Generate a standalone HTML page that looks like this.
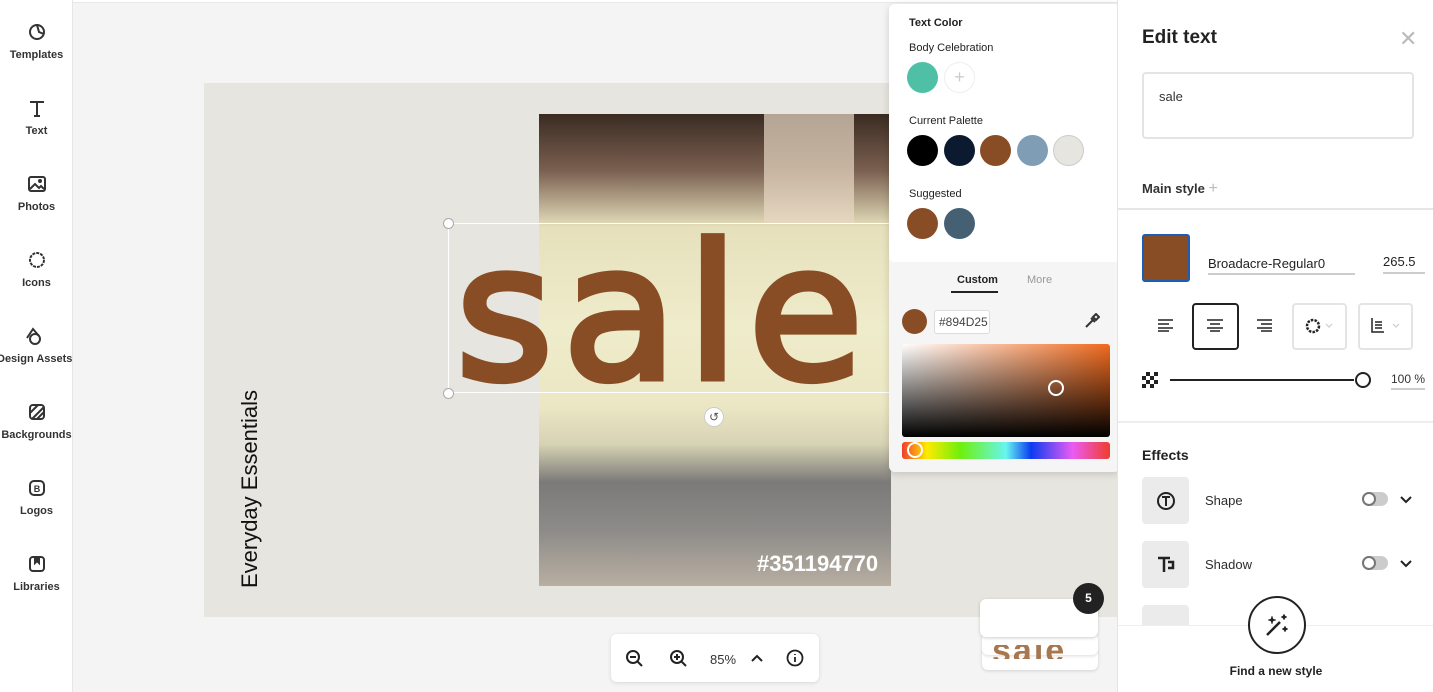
<!DOCTYPE html>
<html><head><style>
*{margin:0;padding:0;box-sizing:border-box}
body{width:1433px;height:692px;overflow:hidden;background:#f4f4f4;font-family:"Liberation Sans",sans-serif;position:relative;color:#2c2c2c}
.abs{position:absolute}
.side{left:0;top:0;width:73px;height:692px;background:#fff;border-right:1px solid #e6e6e6}
.side .it{position:absolute;left:0;width:73px;text-align:center;font-size:11px;font-weight:bold;color:#333}
.side svg{display:block;margin:0 auto 7px}
.circ{position:absolute;width:31px;height:31px;border-radius:50%}
.lbl{position:absolute;font-size:11px;font-weight:bold;color:#222}
.rp{left:1117px;top:0;width:316px;height:692px;background:#fff;border-left:1px solid #e4e4e4}
</style></head><body>
<div class="abs" style="left:0;top:0;width:1433px;height:3px;background:#fff;border-bottom:1px solid #e8e8e8"></div>
<div class="abs side">
 <div class="it" style="top:22px"><svg width="20" height="20" viewBox="0 0 20 20" fill="none" stroke="#333" stroke-width="2"><circle cx="10" cy="10" r="7"/><path d="M10 3 L12 10 L17 12"/></svg>Templates</div>
 <div class="it" style="top:98px"><svg width="20" height="20" viewBox="0 0 20 20" fill="none" stroke="#333" stroke-width="2"><path d="M3 4H17M10 4V18M7 18H13"/></svg>Text</div>
 <div class="it" style="top:174px"><svg width="20" height="20" viewBox="0 0 20 20" fill="none" stroke="#333" stroke-width="2"><rect x="2" y="3" width="16" height="14" rx="2"/><path d="M3 15 L8 10 L12 14 L14 12 L17 15"/><circle cx="13" cy="7" r="1"/></svg>Photos</div>
 <div class="it" style="top:250px"><svg width="20" height="20" viewBox="0 0 20 20" fill="none" stroke="#333" stroke-width="2"><circle cx="10" cy="10" r="7" stroke-dasharray="3 1"/></svg>Icons</div>
 <div class="it" style="top:326px;white-space:nowrap;left:-3px"><svg width="20" height="20" viewBox="0 0 20 20" fill="none" stroke="#333" stroke-width="2"><path d="M3 12 L9 3 L15 10"/><circle cx="11" cy="13" r="5"/></svg>Design Assets</div>
 <div class="it" style="top:402px"><svg width="20" height="20" viewBox="0 0 20 20" fill="none" stroke="#333" stroke-width="2"><rect x="3" y="3" width="14" height="14" rx="3"/><path d="M3 11L11 3M5 17L17 5M10 17L17 10"/></svg>Backgrounds</div>
 <div class="it" style="top:478px"><svg width="20" height="20" viewBox="0 0 20 20" fill="none" stroke="#333" stroke-width="2"><rect x="3" y="3" width="14" height="14" rx="4"/><text x="10" y="14" font-size="9" text-anchor="middle" fill="#333" stroke="none" font-weight="bold">B</text></svg>Logos</div>
 <div class="it" style="top:554px"><svg width="20" height="20" viewBox="0 0 20 20" fill="none" stroke="#333" stroke-width="2"><rect x="3" y="3" width="14" height="14" rx="3"/><path d="M8 3V9L10 7L12 9V3" fill="#333"/></svg>Libraries</div>
</div>
<!-- card -->
<div class="abs" style="left:204px;top:83px;width:913px;height:534px;background:#e6e5df"></div>
<div class="abs" style="left:539px;top:114px;width:352px;height:472px;background:linear-gradient(180deg,#3a2b22 0%,#7a6050 12%,#e6e0bc 24%,#efeccb 45%,#ebe7c4 62%,#d6d2b4 70%,#7b7a78 78%,#8c8b88 88%,#b8aea2 100%);overflow:hidden">
 <div class="abs" style="left:225px;top:0;width:90px;height:110px;background:#e8d8c4;opacity:.7"></div>
 <div class="abs" style="left:218px;top:437px;font-size:22px;font-weight:bold;color:#fff">#351194770</div>
</div>
<div class="abs" style="left:448px;top:223px;width:445px;height:170px;border:1.5px solid #fff"></div>
<div class="abs" style="left:456px;top:199px;font-size:186px;line-height:230px;color:#894d25;-webkit-text-stroke:7px #894d25;letter-spacing:10px;font-family:'DejaVu Sans',sans-serif;width:435px;overflow:hidden;white-space:nowrap">sale</div>
<div class="abs" style="left:443px;top:218px;width:11px;height:11px;border-radius:50%;background:#fff;border:1px solid #aaa"></div>
<div class="abs" style="left:443px;top:388px;width:11px;height:11px;border-radius:50%;background:#fff;border:1px solid #aaa"></div>
<div class="abs" style="left:704px;top:407px;width:20px;height:20px;border-radius:50%;background:#fff;border:1px solid #ccc;font-size:12px;text-align:center;line-height:18px;color:#555">↺</div>
<div class="abs" style="left:150px;top:476px;width:200px;font-size:22px;color:#111;transform:rotate(-90deg);white-space:nowrap;text-align:center">Everyday Essentials</div>
<!-- zoom toolbar -->
<div class="abs" style="left:611px;top:634px;width:208px;height:48px;background:#fff;border-radius:6px;box-shadow:0 1px 4px rgba(0,0,0,.12);font-size:13px;color:#333">
 <svg class="abs" style="left:14px;top:15px" width="18" height="18" fill="none" stroke="#222" stroke-width="2"><circle cx="8" cy="8" r="6"/><path d="M5 8H11M12.5 12.5L17 17"/></svg>
 <svg class="abs" style="left:58px;top:15px" width="18" height="18" fill="none" stroke="#222" stroke-width="2"><circle cx="8" cy="8" r="6"/><path d="M5 8H11M8 5V11M12.5 12.5L17 17"/></svg>
 <span class="abs" style="left:99px;top:18px">85%</span>
 <svg class="abs" style="left:140px;top:19px" width="12" height="10" fill="none" stroke="#222" stroke-width="2"><path d="M1 8L6 3L11 8"/></svg>
 <svg class="abs" style="left:175px;top:15px" width="18" height="18" fill="none" stroke="#222" stroke-width="1.8"><circle cx="9" cy="9" r="7.5"/><path d="M9 8V13M9 5V6"/></svg>
</div>
<!-- page stack -->
<div class="abs" style="left:982px;top:648px;width:116px;height:22px;background:#fff;border-radius:6px;box-shadow:0 1px 3px rgba(0,0,0,.15)"></div>
<div class="abs" style="left:982px;top:633px;width:116px;height:22px;background:#fff;border-radius:6px;box-shadow:0 1px 3px rgba(0,0,0,.15)"></div>
<div class="abs" style="left:992px;top:645px;width:100px;height:14px;overflow:hidden"><div style="font-size:34px;font-weight:bold;color:#a7774f;line-height:20px;letter-spacing:2px;margin-top:-4px">sale</div></div>
<div class="abs" style="left:980px;top:599px;width:118px;height:38px;background:#fff;border-radius:6px;box-shadow:0 1px 3px rgba(0,0,0,.2)"></div>
<div class="abs" style="left:1073px;top:583px;width:31px;height:31px;border-radius:50%;background:#222;color:#fff;font-size:12px;font-weight:bold;text-align:center;line-height:31px">5</div>
<!-- color popover -->
<div class="abs" style="left:889px;top:4px;width:231px;height:468px;background:#f5f5f5;border-radius:6px;box-shadow:0 2px 8px rgba(0,0,0,.15)">
 <div class="abs" style="left:0;top:0;width:231px;height:258px;background:#fff;border-radius:6px"></div>
 <div class="lbl" style="left:20px;top:13px">Text Color</div>
 <div class="lbl" style="left:20px;top:38px;font-weight:normal;color:#222">Body Celebration</div>
 <div class="circ" style="left:18px;top:58px;background:#4fbfa6"></div>
 <div class="circ" style="left:55px;top:58px;background:#fff;border:1px solid #eee;color:#ccc;text-align:center;line-height:28px;font-size:18px">+</div>
 <div class="lbl" style="left:20px;top:111px;font-weight:normal">Current Palette</div>
 <div class="circ" style="left:18px;top:131px;background:#000"></div>
 <div class="circ" style="left:55px;top:131px;background:#0b1a2e"></div>
 <div class="circ" style="left:91px;top:131px;background:#894d25"></div>
 <div class="circ" style="left:128px;top:131px;background:#7f9db5"></div>
 <div class="circ" style="left:164px;top:131px;background:#e6e5df;border:1px solid #ccc"></div>
 <div class="lbl" style="left:20px;top:184px;font-weight:normal">Suggested</div>
 <div class="circ" style="left:18px;top:204px;background:#894d25"></div>
 <div class="circ" style="left:55px;top:204px;background:#456073"></div>
 <div class="lbl" style="left:68px;top:270px">Custom</div>
 <div class="abs" style="left:62px;top:287px;width:47px;height:2px;background:#222"></div>
 <div class="lbl" style="left:138px;top:270px;font-weight:normal;color:#999">More</div>
 <div class="circ" style="left:13px;top:305px;width:25px;height:25px;background:#894d25"></div>
 <div class="abs" style="left:45px;top:306px;width:56px;height:24px;background:#fff;border:1px solid #ddd;border-radius:3px;font-size:12px;line-height:22px;padding-left:4px;color:#444">#894D25</div>
 <svg class="abs" style="left:195px;top:309px" width="16" height="16" fill="none" stroke="#333" stroke-width="2"><path d="M2 14L9 7M9 4L12 1L15 4L12 7Z M7 5L11 9"/></svg>
 <div class="abs" style="left:13px;top:340px;width:208px;height:93px;border-radius:3px;background:linear-gradient(0deg,#000,rgba(0,0,0,0)),linear-gradient(90deg,#fff,#f06a1e)"></div>
 <div class="abs" style="left:159px;top:376px;width:16px;height:16px;border:2px solid #fff;border-radius:50%"></div>
 <div class="abs" style="left:13px;top:438px;width:208px;height:17px;border-radius:3px;background:linear-gradient(90deg,#f03c2c,#ffea00 12%,#6ef00c 28%,#67f5f0 50%,#0a3cf0 62%,#ea5cf3 82%,#f03c2c)"></div>
 <div class="abs" style="left:18px;top:438px;width:16px;height:16px;border:2px solid #fff;border-radius:50%"></div>
</div>
<!-- right panel -->
<div class="abs rp">
 <div class="abs" style="left:24px;top:27px;font-size:19px;font-weight:bold;color:#222">Edit text</div>
 <div class="abs" style="left:281px;top:26px;font-size:22px;color:#bbb">✕</div>
 <div class="abs" style="left:24px;top:72px;width:272px;height:67px;border:2px solid #e4e4e4;border-radius:4px;font-size:13px;padding:15px 15px;color:#333">sale</div>
 <div class="abs" style="left:24px;top:180px;font-size:13px;font-weight:bold;color:#333">Main style <span style="color:#bbb;font-weight:normal;font-size:16px">+</span></div>
 <div class="abs" style="left:0;top:208px;width:316px;height:2px;background:#e6e6e6"></div>
 <div class="abs" style="left:24px;top:234px;width:48px;height:48px;background:#894d25;border:2px solid #1a5fb4;border-radius:3px"></div>
 <div class="abs" style="left:90px;top:256px;width:147px;font-size:13px;color:#222;border-bottom:2px solid #ccc;padding-bottom:2px">Broadacre-Regular0</div>
 <div class="abs" style="left:265px;top:254px;width:42px;font-size:13px;color:#222;border-bottom:2px solid #ccc;padding-bottom:3px">265.5</div>
 <svg class="abs" style="left:40px;top:318px" width="16" height="14" stroke="#222" stroke-width="1.6"><path d="M0 2H15M0 6H11M0 10H15M0 13H11"/></svg>
 <div class="abs" style="left:74px;top:303px;width:47px;height:47px;border:2px solid #222;border-radius:4px"></div>
 <svg class="abs" style="left:89px;top:318px" width="16" height="14" stroke="#222" stroke-width="1.6"><path d="M0 2H16M3 6H13M0 10H16M3 13H13"/></svg>
 <svg class="abs" style="left:139px;top:318px" width="16" height="14" stroke="#222" stroke-width="1.6"><path d="M0 2H15M4 6H15M0 10H15M4 13H15"/></svg>
 <div class="abs" style="left:174px;top:303px;width:55px;height:47px;border:2px solid #e4e4e4;border-radius:4px"></div>
 <svg class="abs" style="left:187px;top:317px" width="30" height="18" fill="none" stroke="#222" stroke-width="2.5"><circle cx="8" cy="9" r="6" stroke-dasharray="2.5 1.2"/><path d="M21 7L24 10L27 7" stroke="#ccc" stroke-width="1.2"/></svg>
 <div class="abs" style="left:240px;top:303px;width:55px;height:47px;border:2px solid #e4e4e4;border-radius:4px"></div>
 <svg class="abs" style="left:252px;top:317px" width="32" height="18" fill="none" stroke="#222" stroke-width="1.5"><path d="M2 1V15H14M5 5H12M5 8H12M5 11H12"/><path d="M23 7L26 10L29 7" stroke="#ccc" stroke-width="1.2"/></svg>
 <svg class="abs" style="left:24px;top:372px" width="16" height="16"><rect width="16" height="16" fill="#222"/><path d="M0 0h4v4H0zM8 0h4v4H8zM4 4h4v4H4zM12 4h4v4h-4zM0 8h4v4H0zM8 8h4v4H8zM4 12h4v4H4zM12 12h4v4h-4z" fill="#fff"/></svg>
 <div class="abs" style="left:52px;top:379px;width:184px;height:2px;background:#222"></div>
 <div class="abs" style="left:237px;top:372px;width:16px;height:16px;border:2px solid #222;border-radius:50%;background:#fff"></div>
 <div class="abs" style="left:273px;top:372px;font-size:12px;color:#333;border-bottom:2px solid #ccc;padding-bottom:2px">100 %</div>
 <div class="abs" style="left:0;top:421px;width:316px;height:2px;background:#eee"></div>
 <div class="abs" style="left:24px;top:447px;font-size:14px;font-weight:bold;color:#222">Effects</div>
 <div class="abs" style="left:24px;top:477px;width:47px;height:47px;background:#ebebeb;border-radius:4px"></div>
 <svg class="abs" style="left:38px;top:491px" width="20" height="20" fill="none" stroke="#222" stroke-width="2"><circle cx="10" cy="10" r="8"/><path d="M6 6H14M10 6V15"/></svg>
 <div class="abs" style="left:87px;top:493px;font-size:13px">Shape</div>
 <div class="abs" style="left:244px;top:492px;width:26px;height:14px;border-radius:7px;background:#ccc"><div style="width:14px;height:14px;border:2px solid #777;border-radius:50%;background:#fff"></div></div>
 <svg class="abs" style="left:282px;top:495px" width="12" height="9" fill="none" stroke="#222" stroke-width="2"><path d="M1 2L6 7L11 2"/></svg>
 <div class="abs" style="left:24px;top:541px;width:47px;height:47px;background:#ebebeb;border-radius:4px"></div>
 <svg class="abs" style="left:38px;top:555px" width="20" height="20" fill="none" stroke="#222" stroke-width="2.5"><path d="M2 3H14M8 3V17M12 7H17V13H12"/></svg>
 <div class="abs" style="left:87px;top:557px;font-size:13px">Shadow</div>
 <div class="abs" style="left:244px;top:556px;width:26px;height:14px;border-radius:7px;background:#ccc"><div style="width:14px;height:14px;border:2px solid #777;border-radius:50%;background:#fff"></div></div>
 <svg class="abs" style="left:282px;top:559px" width="12" height="9" fill="none" stroke="#222" stroke-width="2"><path d="M1 2L6 7L11 2"/></svg>
 <div class="abs" style="left:24px;top:605px;width:47px;height:30px;background:#ebebeb;border-radius:4px"></div>
 <div class="abs" style="left:0;top:625px;width:316px;height:67px;background:#fff;border-top:1px solid #eee"></div>
 <div class="abs" style="left:130px;top:596px;width:58px;height:58px;border-radius:50%;border:2.5px solid #222;background:#fff"></div>
 <svg class="abs" style="left:146px;top:612px" width="26" height="26" fill="none" stroke="#222" stroke-width="2.5"><path d="M3 23L16 10"/><path d="M8 4l1 3 3 1-3 1-1 3-1-3-3-1 3-1zM20 2l1 2 2 1-2 1-1 2-1-2-2-1 2-1zM21 14l1 2 2 1-2 1-1 2-1-2-2-1 2-1z" fill="#222" stroke-width="0.5"/></svg>
 <div class="abs" style="left:0;top:664px;width:316px;text-align:center;font-size:12px;font-weight:bold;color:#222">Find a new style</div>
</div>
</body></html>
